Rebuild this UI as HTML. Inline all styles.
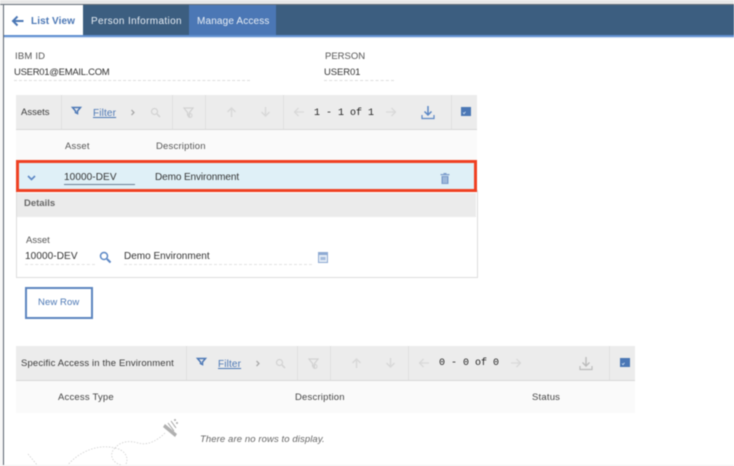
<!DOCTYPE html>
<html><head><meta charset="utf-8"><style>
html,body{margin:0;padding:0;background:#fff}
#p{position:relative;width:734px;height:466px;overflow:hidden;background:#fff;font-family:"Liberation Sans",sans-serif;font-size:10px;color:#3a3a3a;filter:blur(.45px)}
#p div,#p svg{position:absolute}
.t{position:absolute;white-space:nowrap;line-height:12px}
.m{font-family:"Liberation Mono",monospace;font-size:10px;color:#222}
.sep{width:1px;background:#e0e0e0}
</style></head><body><div id="p">
<div style="left:0;top:0;width:734px;height:4px;background:#e8e8e8"></div>
<div style="left:0;top:4px;width:734px;height:1px;background:#666f78"></div>
<div style="left:0;top:5px;width:3px;height:461px;background:#f7f7f7"></div>
<div style="left:3px;top:5px;width:1px;height:461px;background:#5b6570"></div>
<div style="left:4px;top:5px;width:730px;height:30px;background:#3c5e80"></div>
<div style="left:4px;top:35px;width:730px;height:2px;background:#5f8fd0"></div>
<div style="left:4px;top:37px;width:730px;height:1px;background:#d5e2f5"></div>
<div style="left:4px;top:5px;width:79px;height:30px;background:#fff"></div>
<div style="left:189px;top:5px;width:87px;height:30px;background:#4b77b5"></div>
<svg style="left:11px;top:15px" width="14" height="12" viewBox="0 0 14 12"><path d="M12.5 6H2M6.5 1.5L2 6l4.5 4.5" fill="none" stroke="#4b77b5" stroke-width="2"/></svg>
<span class="t" style="left:31px;top:16px;color:#4b77b5;font-weight:bold;font-size:10px;letter-spacing:.1px">List View</span>
<span class="t" style="left:91px;top:16px;color:#e8eef5;letter-spacing:.36px">Person Information</span>
<span class="t" style="left:197px;top:16px;color:#e8eef5;letter-spacing:.15px">Manage Access</span>

<span class="t" style="left:15px;top:51px;font-size:9.5px;color:#555;letter-spacing:.2px">IBM ID</span>
<span class="t" style="left:14px;top:67px;font-size:9.5px;color:#333;letter-spacing:-.28px">USER01@EMAIL.COM</span>
<div style="left:14px;top:80px;width:236px;border-top:1px dashed #ddd"></div>
<span class="t" style="left:325px;top:51px;font-size:9.5px;color:#555">PERSON</span>
<span class="t" style="left:324px;top:67px;font-size:9.5px;color:#333;letter-spacing:-.1px">USER01</span>
<div style="left:324px;top:80px;width:70px;border-top:1px dashed #ddd"></div>

<!-- Assets toolbar -->
<div style="left:16px;top:95px;width:461px;height:34px;background:#ececec"></div>
<div style="left:16px;top:129px;width:461px;height:1px;background:#d8d8d8"></div>
<div class="sep" style="left:61px;top:95px;height:34px"></div>
<div class="sep" style="left:172px;top:95px;height:34px"></div>
<div class="sep" style="left:205px;top:95px;height:34px"></div>
<div class="sep" style="left:283px;top:95px;height:34px"></div>
<div class="sep" style="left:451px;top:95px;height:34px"></div>
<span class="t" style="left:21px;top:107px;font-size:9.5px">Assets</span>
<svg style="left:71px;top:106px" width="11" height="10" viewBox="0 0 11 10"><path d="M1.500 1.500h8L6.500 5v2.500L4.500 6.500V5z" fill="none" stroke="#4b77b5" stroke-width="1.500"/></svg>
<span class="t" style="left:93px;top:108px;color:#4b77b5;text-decoration:underline;font-size:10px;letter-spacing:.15px">Filter</span>
<svg style="left:130px;top:109px" width="6" height="7" viewBox="0 0 6 7"><path d="M1.500 1l2.500 2.500L1.500 6" fill="none" stroke="#aaa" stroke-width="1.300"/></svg>
<svg style="left:150px;top:107px" width="11" height="11" viewBox="0 0 11 11"><circle cx="4.500" cy="4.500" r="3" fill="none" stroke="#d2d2d2" stroke-width="1.200"/><path d="M7 7l3 3" stroke="#d2d2d2" stroke-width="1.500"/></svg>
<svg style="left:183px;top:107px" width="11" height="12" viewBox="0 0 11 12"><path d="M1 1h9L6.500 5.500v4L4.500 8V5.500z" fill="none" stroke="#d2d2d2" stroke-width="1.200"/><circle cx="7" cy="8.500" r="2" fill="none" stroke="#d2d2d2"/></svg>
<svg style="left:226px;top:106px" width="11" height="12" viewBox="0 0 11 12"><path d="M5.500 11V2M1.500 6l4-4 4 4" fill="none" stroke="#d8d8d8" stroke-width="1.400"/></svg>
<svg style="left:260px;top:106px" width="11" height="12" viewBox="0 0 11 12"><path d="M5.500 1v9M1.500 6l4 4 4-4" fill="none" stroke="#d8d8d8" stroke-width="1.400"/></svg>
<svg style="left:293px;top:107px" width="11" height="10" viewBox="0 0 11 10"><path d="M11 5H1.500M5.500 1l-4 4 4 4" fill="none" stroke="#d8d8d8" stroke-width="1.300"/></svg>
<span class="t m" style="left:314px;top:108px">1 - 1 of 1</span>
<svg style="left:386px;top:107px" width="11" height="10" viewBox="0 0 11 10"><path d="M0 5h9.500M5.500 1l4 4-4 4" fill="none" stroke="#d8d8d8" stroke-width="1.300"/></svg>
<svg style="left:421px;top:105px" width="14" height="15" viewBox="0 0 14 15"><path d="M7 1v9M3.500 6.500L7 10l3.500-3.500" fill="none" stroke="#5b87c5" stroke-width="1.500"/><path d="M1 10v3.500h12V10" fill="none" stroke="#5b87c5" stroke-width="1.200"/></svg>
<svg style="left:461px;top:107px" width="10" height="9" viewBox="0 0 10 9"><rect width="10" height="9" fill="#4b77b5"/><path d="M2 5.500l1 1.200 1.500-2" fill="none" stroke="#cfe0f5" stroke-width=".8"/></svg>

<!-- header row -->
<div style="left:16px;top:130px;width:461px;height:30px;background:#fafafa"></div>
<span class="t" style="left:65px;top:141px;font-size:9.5px;color:#555;letter-spacing:.2px">Asset</span>
<span class="t" style="left:156px;top:141px;font-size:9.5px;color:#555;letter-spacing:.2px">Description</span>

<!-- details -->
<div style="left:16px;top:190px;width:460px;height:87px;background:#fff;border:solid #ddd;border-width:0 1px 1px 1px"></div>
<div style="left:17px;top:193px;width:459px;height:24px;background:#ebebeb"></div>
<span class="t" style="left:24px;top:198px;font-size:9.500px;font-weight:bold;color:#666">Details</span>
<span class="t" style="left:26px;top:235px;font-size:9.500px;color:#555">Asset</span>
<span class="t" style="left:25px;top:251px;font-size:10px;color:#333;letter-spacing:.1px">10000-DEV</span>
<div style="left:25px;top:264px;width:70px;border-top:1px dashed #e2e2e2"></div>
<svg style="left:99px;top:251px" width="13" height="13" viewBox="0 0 13 13"><circle cx="5" cy="5" r="3.500" fill="none" stroke="#5b87c5" stroke-width="1.500"/><path d="M8 8l3.500 3.500" stroke="#5b87c5" stroke-width="2"/></svg>
<span class="t" style="left:124px;top:251px;font-size:10px;color:#333">Demo Environment</span>
<div style="left:124px;top:264px;width:188px;border-top:1px dashed #e2e2e2"></div>
<svg style="left:318px;top:252px" width="10" height="11" viewBox="0 0 10 11"><rect x="0" y="0" width="10" height="11" fill="#8eaad3"/><rect x="1" y="3" width="8" height="7" fill="#e3ebf5"/><rect x="2.500" y="5" width="5" height="3" fill="#a4bbdc"/></svg>

<!-- selected row -->
<div style="left:16px;top:160px;width:455px;height:26px;background:#dff0f7;border:3px solid #ef4123"></div>
<svg style="left:26px;top:174px" width="11" height="8" viewBox="0 0 11 8"><path d="M2 2L5.500 5.500 9 2" fill="none" stroke="#5b87c5" stroke-width="1.600"/></svg>
<span class="t" style="left:64px;top:172px;font-size:10px;color:#333;letter-spacing:.1px">10000-DEV</span>
<div style="left:64px;top:184px;width:71px;height:1px;background:#6a7f95"></div>
<span class="t" style="left:155px;top:172px;font-size:10px;color:#333;letter-spacing:-.1px">Demo Environment</span>
<svg style="left:440px;top:172px" width="10" height="12" viewBox="0 0 10 12"><path d="M3.500 1h3v1H9.500v1.300H.5V2h3zM1.500 4h7v8h-7z" fill="#7c9ccb"/><path d="M3.500 5v6M5 5v6M6.500 5v6" stroke="#dfeff7" stroke-width=".5"/></svg>

<!-- New Row -->
<div style="left:25px;top:287px;width:64px;height:28px;border:2px solid #5b84bf;background:#fff"></div>
<span class="t" style="left:38px;top:297px;color:#4b77b5;font-size:9.500px;letter-spacing:.1px">New Row</span>

<!-- Second toolbar -->
<div style="left:16px;top:346px;width:619px;height:34px;background:#ececec"></div>
<div style="left:16px;top:380px;width:619px;height:1px;background:#d8d8d8"></div>
<div class="sep" style="left:186px;top:346px;height:34px"></div>
<div class="sep" style="left:297px;top:346px;height:34px"></div>
<div class="sep" style="left:330px;top:346px;height:34px"></div>
<div class="sep" style="left:408px;top:346px;height:34px"></div>
<div class="sep" style="left:609px;top:346px;height:34px"></div>
<span class="t" style="left:21px;top:358px;font-size:9.500px;color:#3a3a3a;letter-spacing:.15px">Specific Access in the Environment</span>
<svg style="left:196px;top:357px" width="11" height="10" viewBox="0 0 11 10"><path d="M1.500 1.500h8L6.500 5v2.500L4.500 6.500V5z" fill="none" stroke="#4b77b5" stroke-width="1.500"/></svg>
<span class="t" style="left:218px;top:359px;color:#4b77b5;text-decoration:underline;font-size:10px;letter-spacing:.15px">Filter</span>
<svg style="left:255px;top:360px" width="6" height="7" viewBox="0 0 6 7"><path d="M1.500 1l2.500 2.500L1.500 6" fill="none" stroke="#aaa" stroke-width="1.300"/></svg>
<svg style="left:275px;top:358px" width="11" height="11" viewBox="0 0 11 11"><circle cx="4.500" cy="4.500" r="3" fill="none" stroke="#d2d2d2" stroke-width="1.200"/><path d="M7 7l3 3" stroke="#d2d2d2" stroke-width="1.500"/></svg>
<svg style="left:308px;top:358px" width="11" height="12" viewBox="0 0 11 12"><path d="M1 1h9L6.500 5.500v4L4.500 8V5.500z" fill="none" stroke="#d2d2d2" stroke-width="1.200"/><circle cx="7" cy="8.500" r="2" fill="none" stroke="#d2d2d2"/></svg>
<svg style="left:351px;top:357px" width="11" height="12" viewBox="0 0 11 12"><path d="M5.500 11V2M1.500 6l4-4 4 4" fill="none" stroke="#d8d8d8" stroke-width="1.400"/></svg>
<svg style="left:385px;top:357px" width="11" height="12" viewBox="0 0 11 12"><path d="M5.500 1v9M1.500 6l4 4 4-4" fill="none" stroke="#d8d8d8" stroke-width="1.400"/></svg>
<svg style="left:418px;top:358px" width="11" height="10" viewBox="0 0 11 10"><path d="M11 5H1.500M5.500 1l-4 4 4 4" fill="none" stroke="#d8d8d8" stroke-width="1.300"/></svg>
<span class="t m" style="left:439px;top:358px">0 - 0 of 0</span>
<svg style="left:511px;top:358px" width="11" height="10" viewBox="0 0 11 10"><path d="M0 5h9.500M5.500 1l4 4-4 4" fill="none" stroke="#d8d8d8" stroke-width="1.300"/></svg>
<svg style="left:579px;top:356px" width="14" height="15" viewBox="0 0 14 15"><path d="M7 1v9M3.500 6.500L7 10l3.500-3.500" fill="none" stroke="#bcbcbc" stroke-width="1.400"/><path d="M1 10v3.500h12V10" fill="none" stroke="#bcbcbc" stroke-width="1.200"/></svg>
<svg style="left:620px;top:358px" width="10" height="9" viewBox="0 0 10 9"><rect width="10" height="9" fill="#4b77b5"/><path d="M2 5.500l1 1.200 1.500-2" fill="none" stroke="#cfe0f5" stroke-width=".8"/></svg>

<div style="left:16px;top:381px;width:619px;height:32px;background:#fafafa"></div>
<span class="t" style="left:58px;top:392px;font-size:9.500px;color:#444;letter-spacing:.2px">Access Type</span>
<span class="t" style="left:295px;top:392px;font-size:9.500px;color:#444;letter-spacing:.2px">Description</span>
<span class="t" style="left:532px;top:392px;font-size:9.500px;color:#444;letter-spacing:.2px">Status</span>

<!-- bee + trail -->
<svg style="left:20px;top:418px" width="165" height="48" viewBox="0 0 165 48"><path d="M145 15C138 22 128 28 118 25C108 22 100 24 95 30C80 26 60 32 47 48" fill="none" stroke="#cfcfcf" stroke-width=".8" stroke-dasharray="1.500 1.500"/><path d="M95 30C88 36 92 48 108 48M95 30C105 32 110 40 105 48M8 36L18 48" fill="none" stroke="#cfcfcf" stroke-width=".8" stroke-dasharray="1.500 1.500"/><path d="M145 6l12 10-2 3-12-10z" fill="#b0b0b0"/><path d="M148 5l6 8M151 3l5 7" stroke="#a5a5a5" stroke-width="1"/><circle cx="157" cy="5" r="1" fill="#aaa"/><circle cx="155" cy="2" r="1" fill="#aaa"/></svg>
<span class="t" style="left:200px;top:434px;font-size:9.500px;font-style:italic;color:#666;letter-spacing:.1px">There are no rows to display.</span>
<div style="left:0;top:465px;width:734px;height:1px;background:#f2f2f2"></div>
</div></body></html>
